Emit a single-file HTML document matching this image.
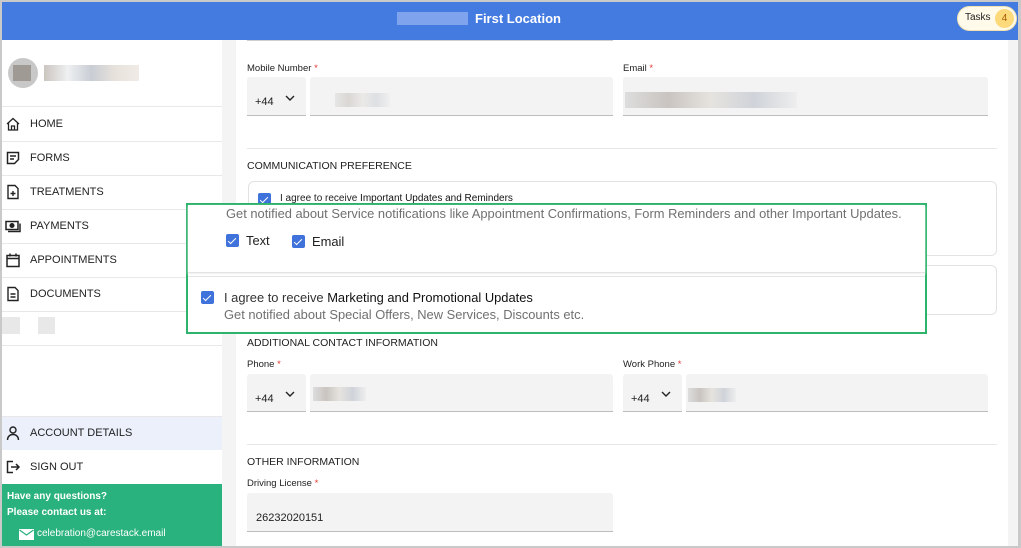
<!DOCTYPE html>
<html><head><style>
*{box-sizing:border-box;margin:0;padding:0}
body{width:1021px;height:548px;overflow:hidden;background:#c9c9c9;font-family:"Liberation Sans",sans-serif;position:relative;color:#222}
.a{position:absolute}
.hd{left:2px;top:2px;width:1016px;height:38px;background:#447be0}
.sb{left:2px;top:40px;width:220px;height:506px;background:#fff}
.ln{position:absolute;left:0;width:220px;height:1px;background:#e8e8e8}
.it{position:absolute;left:28px;font-size:11px;color:#222}
.ic{position:absolute;left:3px;width:16px;height:16px}
.lbl{font-size:9.5px;color:#222}
.lbl b{color:#e53935;font-weight:normal}
.inp{background:#f3f3f3;border-bottom:1px solid #bdbdbd;border-radius:3px 3px 0 0}
.sec{font-size:10.5px;color:#222}
.cb{width:13px;height:13px;background:#3f72da;border-radius:2px}
.cb:after{content:"";position:absolute;left:4px;top:1.5px;width:3px;height:7px;border:solid #fff;border-width:0 1.5px 1.5px 0;transform:rotate(45deg)}
.blur{background:linear-gradient(90deg,#ddd,#c9c4c0,#e6e3df,#cfd3d9,#eee)}
.chev{position:absolute;width:10px;height:6px}
</style></head><body>
<div class="a hd"></div>
<div class="a" style="left:397px;top:12px;width:71px;height:13px;background:#7fa3ec"></div>
<div class="a" style="left:475px;top:11px;font-size:13px;font-weight:bold;color:#fff">First Location</div>
<div class="a" style="left:957px;top:6px;width:60px;height:25px;background:#fffaea;border:1px solid #f2e2b0;border-radius:13px"></div>
<div class="a" style="left:965px;top:12px;font-size:10px;line-height:12px;color:#222">Tasks</div>
<div class="a" style="left:995px;top:9px;width:19px;height:19px;border-radius:50%;background:#fcd97a;font-size:10px;color:#a65a00;text-align:center;line-height:19px">4</div>

<div class="a sb">
 <div class="a" style="left:6px;top:18px;width:30px;height:30px;border-radius:50%;background:#c8c8c8"></div>
 <div class="a" style="left:11px;top:25px;width:18px;height:16px;background:#a09a95"></div>
 <div class="a" style="left:42px;top:25px;width:95px;height:16px;background:linear-gradient(90deg,#ccc5c0,#eef0f2,#c9cdd4,#e8e2dc,#f0ebe6)"></div>
 <div class="ln" style="top:66px"></div><div class="ln" style="top:101px"></div><div class="ln" style="top:135px"></div><div class="ln" style="top:169px"></div><div class="ln" style="top:203px"></div><div class="ln" style="top:237px"></div><div class="ln" style="top:271px"></div><div class="ln" style="top:305px"></div><div class="ln" style="top:376px"></div>
 <svg class="ic" style="top:76px" viewBox="0 0 16 16" fill="none" stroke="#222" stroke-width="1.3"><path d="M2 8L8 2.5 14 8M3.5 6.8V14h9V6.8M6.5 14v-4h3v4"/></svg>
 <div class="it" style="top:78px">HOME</div>
 <svg class="ic" style="top:110px" viewBox="0 0 16 16" fill="none" stroke="#222" stroke-width="1.5"><path d="M2.5 2.5h11v7l-4 4h-7z M5 6h6M5 9h4"/></svg>
 <div class="it" style="top:112px">FORMS</div>
 <svg class="ic" style="top:144px" viewBox="0 0 16 16" fill="none" stroke="#222" stroke-width="1.4"><path d="M3 1.5h7l3 3v10H3z M8 7v5M5.5 9.5h5"/></svg>
 <div class="it" style="top:146px">TREATMENTS</div>
 <svg class="ic" style="top:178px" viewBox="0 0 16 16" fill="none" stroke="#222" stroke-width="1.5"><path d="M1 3.5h12v8H1z M15 5.5v8H3"/><circle cx="7" cy="7.5" r="1.8" fill="#222"/></svg>
 <div class="it" style="top:180px">PAYMENTS</div>
 <svg class="ic" style="top:212px" viewBox="0 0 16 16" fill="none" stroke="#222" stroke-width="1.5"><path d="M2 3.5h12v11H2z M2 6.5h12M5 1.5v3M11 1.5v3"/></svg>
 <div class="it" style="top:214px">APPOINTMENTS</div>
 <svg class="ic" style="top:246px" viewBox="0 0 16 16" fill="none" stroke="#222" stroke-width="1.4"><path d="M3 1.5h7l3 3v10H3z M5.5 8h5M5.5 11h5"/></svg>
 <div class="it" style="top:248px">DOCUMENTS</div>
 <div class="a" style="left:0;top:277px;width:18px;height:17px;background:#e8e8e8"></div>
 <div class="a" style="left:36px;top:277px;width:17px;height:17px;background:#e8e8e8"></div>
 <div class="a" style="left:0;top:377px;width:220px;height:33px;background:#ebf0fb"></div>
 <svg class="ic" style="top:385px" viewBox="0 0 16 16" fill="none" stroke="#222" stroke-width="1.4"><circle cx="8" cy="5" r="3"/><path d="M2.5 15c0-3.5 2.5-5.5 5.5-5.5s5.5 2 5.5 5.5"/></svg>
 <div class="it" style="top:387px">ACCOUNT DETAILS</div>
 <svg class="ic" style="top:419px" viewBox="0 0 16 16" fill="none" stroke="#222" stroke-width="1.5"><path d="M8 2.5H2.5v11H8M6 8h8M11 5l3 3-3 3"/></svg>
 <div class="it" style="top:421px">SIGN OUT</div>
 <div class="a" style="left:0;top:444px;width:220px;height:62px;background:#2ab27e"></div>
 <div class="a" style="left:5px;top:451px;font-size:10px;font-weight:bold;color:#fff">Have any questions?</div>
 <div class="a" style="left:5px;top:467px;font-size:10px;font-weight:bold;color:#fff">Please contact us at:</div>
 <svg class="a" style="left:17px;top:489px" width="15" height="11" viewBox="0 0 15 11"><rect width="15" height="11" fill="#fff"/><path d="M0.5 1l7 5 7-5" stroke="#2ab27e" stroke-width="1.2" fill="none"/></svg>
 <div class="a" style="left:35px;top:488px;font-size:10px;color:#fff">celebration@carestack.email</div>
</div>
<div class="a" style="left:222px;top:40px;width:14px;height:506px;background:#f4f4f4"></div>
<div class="a" style="left:236px;top:40px;width:772px;height:506px;background:#fff"></div>
<div class="a" style="left:1008px;top:40px;width:10px;height:506px;background:#f4f4f4"></div>
<div class="a" style="left:247px;top:40px;width:366px;height:1px;background:#cfcfcf"></div>

<div class="a lbl" style="left:247px;top:63px">Mobile Number <b>*</b></div>
<div class="a inp" style="left:247px;top:77px;width:59px;height:39px"></div>
<div class="a" style="left:255px;top:96px;font-size:11px">+44</div>
<svg class="chev" style="left:285px;top:95px" viewBox="0 0 10 6"><path d="M1 1l4 4 4-4" stroke="#222" stroke-width="1.4" fill="none"/></svg>
<div class="a inp" style="left:310px;top:77px;width:303px;height:39px"></div>
<div class="a blur" style="left:335px;top:93px;width:55px;height:14px;opacity:.6"></div>
<div class="a lbl" style="left:623px;top:63px">Email <b>*</b></div>
<div class="a inp" style="left:623px;top:77px;width:365px;height:39px"></div>
<div class="a blur" style="left:625px;top:92px;width:172px;height:16px"></div>
<div class="a" style="left:247px;top:148px;width:750px;height:1px;background:#e8e8e8"></div>
<div class="a sec" style="left:247px;top:160px">COMMUNICATION PREFERENCE</div>
<div class="a" style="left:248px;top:181px;width:749px;height:75px;border:1px solid #e2e2e2;border-radius:6px"></div>
<div class="a cb" style="left:258px;top:193px"></div>
<div class="a" style="left:280px;top:193px;font-size:10px">I agree to receive <span style="color:#111">Important Updates and Reminders</span></div>
<div class="a" style="left:248px;top:265px;width:749px;height:50px;border:1px solid #e2e2e2;border-radius:6px"></div>

<div class="a" style="left:186px;top:203px;width:741px;height:131px;border:2px solid #2eb36c;background:#fff"></div>
<div class="a" style="left:188px;top:205px;width:737px;height:68px;border-bottom:1px solid #e4e4e4;box-shadow:0 1px 2px #eee"></div>
<div class="a" style="left:226px;top:206px;font-size:12.9px;color:#707070">Get notified about Service notifications like Appointment Confirmations, Form Reminders and other Important Updates.</div>
<div class="a cb" style="left:226px;top:234px"></div>
<div class="a" style="left:246px;top:233px;font-size:12.9px">Text</div>
<div class="a cb" style="left:292px;top:235px"></div>
<div class="a" style="left:312px;top:234px;font-size:12.9px">Email</div>
<div class="a" style="left:188px;top:276px;width:737px;height:1px;background:#e4e4e4"></div>
<div class="a cb" style="left:201px;top:291px"></div>
<div class="a" style="left:224px;top:290px;font-size:12.9px;color:#333">I agree to receive <span style="color:#111">Marketing and Promotional Updates</span></div>
<div class="a" style="left:224px;top:307px;font-size:12.9px;color:#707070">Get notified about Special Offers, New Services, Discounts etc.</div>

<div class="a sec" style="left:247px;top:337px">ADDITIONAL CONTACT INFORMATION</div>
<div class="a lbl" style="left:247px;top:359px">Phone <b>*</b></div>
<div class="a inp" style="left:247px;top:374px;width:59px;height:38px"></div>
<div class="a" style="left:255px;top:393px;font-size:11px">+44</div>
<svg class="chev" style="left:285px;top:391px" viewBox="0 0 10 6"><path d="M1 1l4 4 4-4" stroke="#222" stroke-width="1.4" fill="none"/></svg>
<div class="a inp" style="left:310px;top:374px;width:303px;height:38px"></div>
<div class="a blur" style="left:313px;top:387px;width:53px;height:14px"></div>
<div class="a lbl" style="left:623px;top:359px">Work Phone <b>*</b></div>
<div class="a inp" style="left:623px;top:374px;width:59px;height:38px"></div>
<div class="a" style="left:631px;top:393px;font-size:11px">+44</div>
<svg class="chev" style="left:661px;top:391px" viewBox="0 0 10 6"><path d="M1 1l4 4 4-4" stroke="#222" stroke-width="1.4" fill="none"/></svg>
<div class="a inp" style="left:686px;top:374px;width:302px;height:38px"></div>
<div class="a blur" style="left:688px;top:388px;width:48px;height:14px"></div>
<div class="a" style="left:247px;top:444px;width:750px;height:1px;background:#e8e8e8"></div>
<div class="a sec" style="left:247px;top:456px">OTHER INFORMATION</div>
<div class="a lbl" style="left:247px;top:478px">Driving License <b>*</b></div>
<div class="a inp" style="left:247px;top:493px;width:366px;height:39px"></div>
<div class="a" style="left:256px;top:512px;font-size:11px">26232020151</div>
</body></html>
